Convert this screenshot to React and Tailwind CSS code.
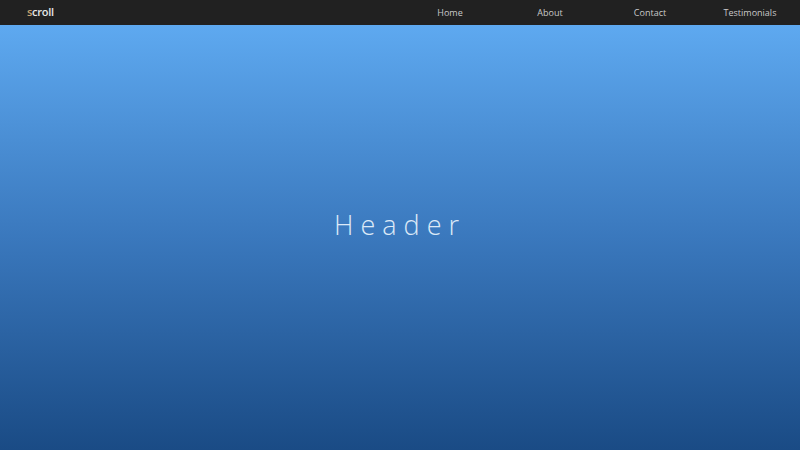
const NAV = ["Home", "About", "Contact", "Testimonials"];

export default function App() {
  return (
    <div
      className="w-[800px] h-[450px] flex flex-col overflow-hidden"
      style={{ fontFamily: '"Open Sans", "Liberation Sans", sans-serif' }}
    >
      {/* Top bar */}
      <nav className="h-[25px] flex-none flex items-center bg-[#212121]">
        <div className="pl-[27px] text-[11px] font-semibold text-[#e6e6e6] tracking-tight">
          <span className="text-[#c9a56f]">s</span>croll
        </div>
        <ul className="ml-auto flex">
          {NAV.map((item) => (
            <li
              key={item}
              className="w-[100px] text-center text-[9px] text-[#c9c9c9]"
            >
              {item}
            </li>
          ))}
        </ul>
      </nav>

      {/* Hero, text centred on the whole page */}
      <header className="flex-1 flex items-center justify-center pb-[25px] bg-gradient-to-b from-[#5ea9f0] via-[#3a78bd] to-[#1a4b85]">
        <h1 className="text-[27px] font-light tracking-[7px] text-[#dce9f7]">
          Header
        </h1>
      </header>
    </div>
  );
}
